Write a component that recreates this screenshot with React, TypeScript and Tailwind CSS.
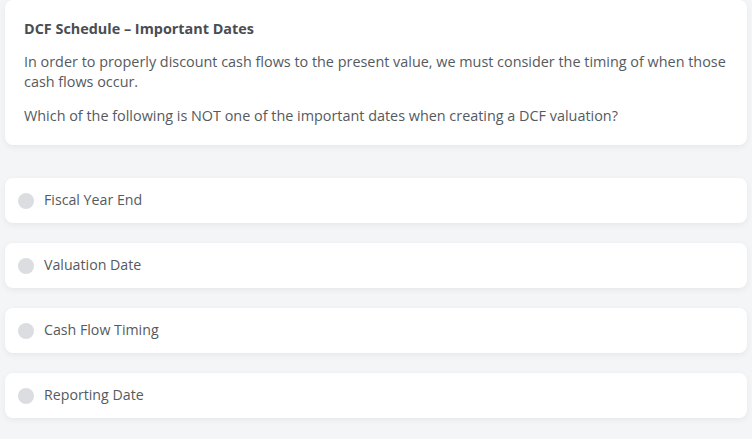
import React from "react";

const options = ["Fiscal Year End", "Valuation Date", "Cash Flow Timing", "Reporting Date"];

const OptionRow = ({ label }: { label: string }) => (
  <div className="flex h-[45px] items-center rounded-lg bg-white pl-[13px] shadow-[0_2px_6px_rgba(0,0,0,0.06)]">
    <span className="h-4 w-4 shrink-0 rounded-full bg-[#dcdde0]" />
    <span className="ml-[10px] pb-px text-[14.2px] leading-5 text-[#555a60]">{label}</span>
  </div>
);

export default function App() {
  return (
    <div
      className="min-h-[439px] bg-[#f4f5f7] px-[5px]"
      style={{ fontFamily: '"Open Sans", "Liberation Sans", sans-serif' }}
    >
      <div className="rounded-lg bg-white px-[19px] pb-[19px] pt-[19px] shadow-[0_2px_6px_rgba(0,0,0,0.06)]">
        <h2 className="text-[14.4px] font-bold leading-5 text-[#4a4d52]">DCF Schedule – Important Dates</h2>
        <p className="mt-[13px] text-[14.4px] leading-5 text-[#555a60]">
          In order to properly discount cash flows to the present value, we must consider the timing of when those
          cash flows occur.
        </p>
        <p className="mt-[14px] text-[14.4px] leading-5 text-[#555a60]">
          Which of the following is NOT one of the important dates when creating a DCF valuation?
        </p>
      </div>

      <div className="mt-[33px] flex flex-col gap-5">
        {options.map((o) => (
          <OptionRow key={o} label={o} />
        ))}
      </div>
    </div>
  );
}
